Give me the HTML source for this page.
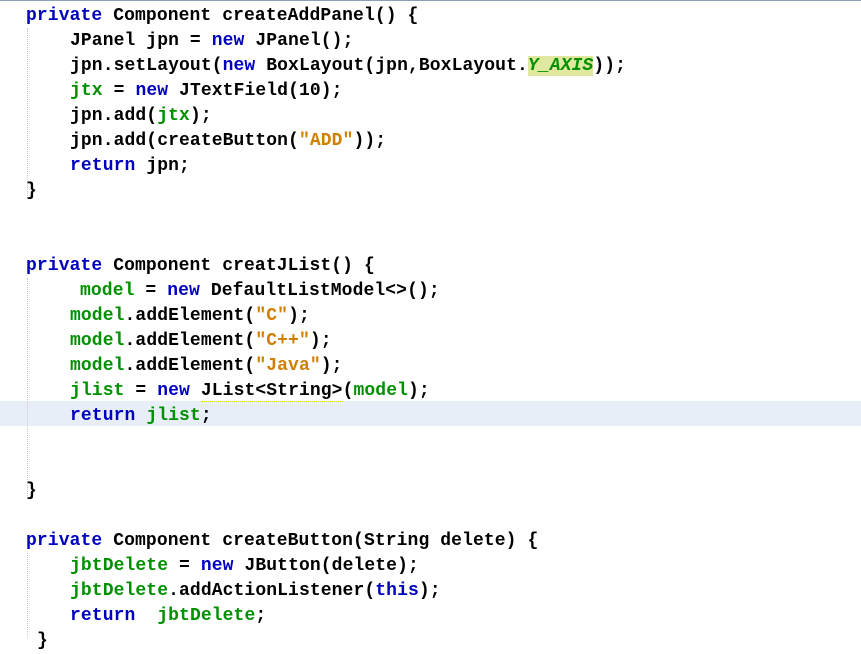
<!DOCTYPE html>
<html><head><style>
body{margin:0;width:861px;height:651px;background:#fff;overflow:hidden;position:relative;font-family:"Liberation Mono",monospace;font-weight:bold;font-size:18px;letter-spacing:0.1px}
.top{position:absolute;left:0;top:0;width:861px;height:1px;background:#8aa0b8}
.l{position:absolute;white-space:pre;line-height:25px;height:25px;color:#000}
.k{color:#0000c0}.g{color:#009000}.s{color:#d08000}
.guide{position:absolute;left:27px;border-left:1px dotted #c8c8c8}
.hl{position:absolute;left:0;top:401px;width:861px;height:25px;background:#e8eef8}
.y{background:#e0e8a0;color:#009000;font-style:italic}
.u{border-bottom:1px dotted #e0d000}
</style></head><body>
<div class="top"></div>
<div class="hl"></div>
<div class="guide" style="top:28px;height:170px"></div>
<div class="guide" style="top:278px;height:220px"></div>
<div class="guide" style="top:553px;height:85px"></div>
<div class="l" style="left:26px;top:4px"><span class="k">private</span> Component createAddPanel() {</div>
<div class="l" style="left:70px;top:29px">JPanel jpn = <span class="k">new</span> JPanel();</div>
<div class="l" style="left:70px;top:54px">jpn.setLayout(<span class="k">new</span> BoxLayout(jpn,BoxLayout.<span class="y">Y_AXIS</span>));</div>
<div class="l" style="left:70px;top:79px"><span class="g">jtx</span> = <span class="k">new</span> JTextField(10);</div>
<div class="l" style="left:70px;top:104px">jpn.add(<span class="g">jtx</span>);</div>
<div class="l" style="left:70px;top:129px">jpn.add(createButton(<span class="s">"ADD"</span>));</div>
<div class="l" style="left:70px;top:154px"><span class="k">return</span> jpn;</div>
<div class="l" style="left:26px;top:179px">}</div>
<div class="l" style="left:26px;top:254px"><span class="k">private</span> Component creatJList() {</div>
<div class="l" style="left:80px;top:279px"><span class="g">model</span> = <span class="k">new</span> DefaultListModel&lt;&gt;();</div>
<div class="l" style="left:70px;top:304px"><span class="g">model</span>.addElement(<span class="s">"C"</span>);</div>
<div class="l" style="left:70px;top:329px"><span class="g">model</span>.addElement(<span class="s">"C++"</span>);</div>
<div class="l" style="left:70px;top:354px"><span class="g">model</span>.addElement(<span class="s">"Java"</span>);</div>
<div class="l" style="left:70px;top:379px"><span class="g">jlist</span> = <span class="k">new</span> <span class="u">JList&lt;String&gt;</span>(<span class="g">model</span>);</div>
<div class="l" style="left:70px;top:404px"><span class="k">return</span> <span class="g">jlist</span>;</div>
<div class="l" style="left:26px;top:479px">}</div>
<div class="l" style="left:26px;top:529px"><span class="k">private</span> Component createButton(String delete) {</div>
<div class="l" style="left:70px;top:554px"><span class="g">jbtDelete</span> = <span class="k">new</span> JButton(delete);</div>
<div class="l" style="left:70px;top:579px"><span class="g">jbtDelete</span>.addActionListener(<span class="k">this</span>);</div>
<div class="l" style="left:70px;top:604px"><span class="k">return</span>  <span class="g">jbtDelete</span>;</div>
<div class="l" style="left:37px;top:629px">}</div>
</body></html>
